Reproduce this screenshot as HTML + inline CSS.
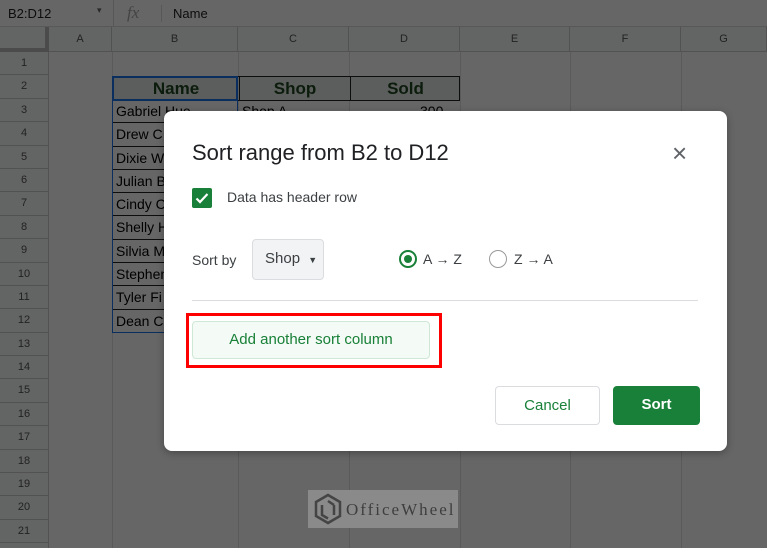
<!DOCTYPE html>
<html style="overflow:hidden;width:767px;height:548px"><head><meta charset="utf-8"><style>
*{margin:0;padding:0;box-sizing:border-box}
body{width:767px;height:548px;overflow:hidden;position:relative;font-family:"Liberation Sans",Arial,sans-serif;background:#fff}
.abs{position:absolute}
.bar{left:0;top:0;width:767px;height:27px;background:#fff;border-bottom:1px solid #ddd;font-size:13px;color:#222}
.colh{top:27px;height:25px;background:#f8f9fa;border-right:1px solid #ccc;border-bottom:1px solid #ccc;font-size:11px;color:#555;text-align:center;line-height:25px}
.rowh{left:0;width:49px;background:#f8f9fa;border-right:1px solid #ccc;border-bottom:1px solid #ccc;font-size:11px;color:#555;text-align:center;height:23.4px;line-height:23px}
.vl{top:52px;height:496px;width:1px;background:#e2e2e2}
.cell{font-size:14px;color:#000;border-bottom:1px solid #222;padding-left:4px;height:23.3px;line-height:22px}
.ov{left:0;top:0;width:767px;height:548px;background:rgba(0,0,0,.6)}
.dlg{left:164px;top:111px;width:563px;height:340px;background:#fff;border-radius:8px;box-shadow:0 2px 8px rgba(0,0,0,.3)}
</style></head><body>
<div class="abs bar">
<div class="abs" style="left:8px;top:6px">B2:D12</div>
<div class="abs" style="left:97px;top:5px;font-size:9px;color:#666">▾</div>
<div class="abs" style="left:113px;top:0;width:1px;height:27px;background:#ddd"></div>
<div class="abs" style="left:127px;top:3px;font-family:'Liberation Serif',serif;font-style:italic;color:#aaa;font-size:17px">fx</div>
<div class="abs" style="left:161px;top:5px;width:1px;height:17px;background:#ddd"></div>
<div class="abs" style="left:173px;top:6px">Name</div>
</div>
<div class="abs colh" style="left:0;width:49px;border-right:4px solid #bbb;border-bottom:4px solid #bbb"></div>
<div class="abs colh" style="left:49px;width:63px">A</div>
<div class="abs colh" style="left:112px;width:126px">B</div>
<div class="abs colh" style="left:238px;width:111px">C</div>
<div class="abs colh" style="left:349px;width:111px">D</div>
<div class="abs colh" style="left:460px;width:110px">E</div>
<div class="abs colh" style="left:570px;width:111px">F</div>
<div class="abs colh" style="left:681px;width:86px">G</div>
<div class="abs vl" style="left:112px"></div><div class="abs vl" style="left:238px"></div><div class="abs vl" style="left:349px"></div><div class="abs vl" style="left:460px"></div><div class="abs vl" style="left:570px"></div><div class="abs vl" style="left:681px"></div>
<div class="abs" style="left:0;top:52px;height:496px;overflow:hidden">
<div class="rowh">1</div><div class="rowh">2</div><div class="rowh">3</div><div class="rowh">4</div><div class="rowh">5</div><div class="rowh">6</div><div class="rowh">7</div><div class="rowh">8</div><div class="rowh">9</div><div class="rowh">10</div><div class="rowh">11</div><div class="rowh">12</div><div class="rowh">13</div><div class="rowh">14</div><div class="rowh">15</div><div class="rowh">16</div><div class="rowh">17</div><div class="rowh">18</div><div class="rowh">19</div><div class="rowh">20</div><div class="rowh">21</div><div class="rowh">22</div>
</div>
<div class="abs" style="left:112px;top:76px;width:348px;height:25px;background:#e6ece8;border:1px solid #222;font-weight:bold;font-size:17px;color:#1e4620;line-height:24px">
<span class="abs" style="left:0;width:126px;text-align:center;top:0">Name</span><span class="abs" style="left:126px;width:111px;text-align:center;top:0;border-left:1px solid #222;height:23px">Shop</span><span class="abs" style="left:237px;width:110px;text-align:center;top:0;border-left:1px solid #222;height:23px">Sold</span>
</div>
<div class="abs" style="left:112px;top:76px;width:126px;height:25px;border:2px solid #1a73e8"></div>
<div class="abs" style="left:112px;top:100px;width:348px">
<div class="cell">Gabriel Hue</div><div class="cell">Drew C</div><div class="cell">Dixie W</div><div class="cell">Julian B</div><div class="cell">Cindy C</div><div class="cell">Shelly H</div><div class="cell">Silvia M</div><div class="cell">Stephen</div><div class="cell">Tyler Fi</div><div class="cell" style="border-bottom:none">Dean C</div>
</div>
<div class="abs" style="left:112px;top:100px;width:126px;height:233px;border:1px solid #1a73e8"></div>
<div class="abs" style="left:242px;top:103px;font-size:14px">Shop A</div>
<div class="abs" style="left:420px;top:103px;font-size:14px">300</div>
<div class="abs ov"></div>
<div class="abs" style="left:308px;top:490px;width:150px;height:38px;background:#8a8a8a">
<svg class="abs" style="left:4px;top:3px" width="32" height="32" viewBox="0 0 32 32" fill="none" stroke="#444" stroke-width="2.5"><path d="M16 2L28 9v14l-12 7L4 23V9z"/><path d="M10 12v10l6 3.5M22 12v10M16 8l6 4"/></svg>
<div class="abs" style="left:38px;top:10px;font-family:'Liberation Serif',serif;font-size:17px;letter-spacing:2px;color:#3e3e3e">OfficeWheel</div>
</div>
<div class="abs dlg">
<div class="abs" style="left:28px;top:29px;font-size:22px;color:#202124">Sort range from B2 to D12</div>
<div class="abs" style="left:508px;top:27px;font-size:26px;color:#5f6368;font-weight:300">×</div>
<div class="abs" style="left:28px;top:77px;width:20px;height:20px;background:#188038;border-radius:2px"><svg width="20" height="20" viewBox="0 0 20 20"><path d="M4.5 10.5l3.5 3.5 7.5-8" stroke="#fff" stroke-width="2.2" fill="none"/></svg></div>
<div class="abs" style="left:63px;top:78px;font-size:14px;color:#3c4043">Data has header row</div>
<div class="abs" style="left:28px;top:141px;font-size:14px;color:#3c4043">Sort by</div>
<div class="abs" style="left:88px;top:128px;width:72px;height:41px;background:#f1f3f4;border:1px solid #dadce0;border-radius:4px;font-size:15px;color:#3c4043;line-height:38px;padding-left:12px">Shop <span style="font-size:9px;margin-left:4px">▼</span></div>
<div class="abs" style="left:235px;top:139px;width:18px;height:18px;border:2px solid #188038;border-radius:50%"><div style="margin:3px;width:8px;height:8px;border-radius:50%;background:#188038"></div></div>
<div class="abs" style="left:259px;top:140px;font-size:14px;color:#3c4043">A → Z</div>
<div class="abs" style="left:325px;top:139px;width:18px;height:18px;border:1px solid #999;border-radius:50%"></div>
<div class="abs" style="left:350px;top:140px;font-size:14px;color:#3c4043">Z → A</div>
<div class="abs" style="left:28px;top:189px;width:506px;height:1px;background:#dadce0"></div>
<div class="abs" style="left:28px;top:210px;width:238px;height:38px;background:#f4faf5;border:1px solid #cfe8d5;border-radius:4px;color:#188038;font-size:15px;text-align:center;line-height:36px">Add another sort column</div>
<div class="abs" style="left:22px;top:202px;width:256px;height:55px;border:3px solid #f00"></div>
<div class="abs" style="left:331px;top:275px;width:105px;height:39px;border:1px solid #dadce0;border-radius:4px;color:#188038;font-size:15px;text-align:center;line-height:37px">Cancel</div>
<div class="abs" style="left:449px;top:275px;width:87px;height:39px;background:#188038;border-radius:4px;color:#fff;font-size:15px;font-weight:bold;text-align:center;line-height:38px">Sort</div>
</div>
</body></html>
